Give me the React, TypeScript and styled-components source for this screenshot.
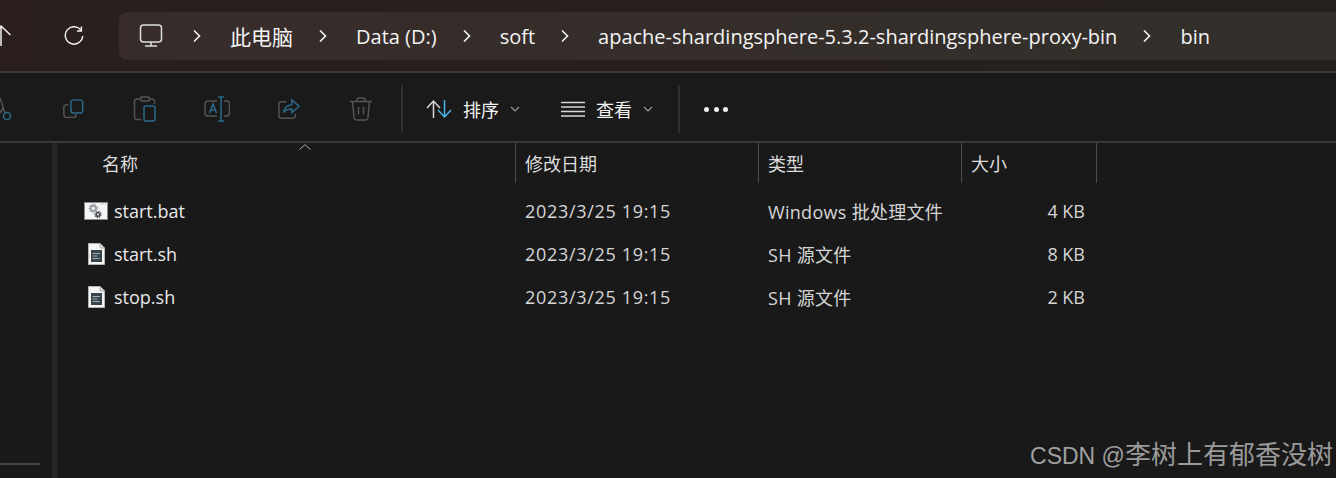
import React from 'react';
import styled, { createGlobalStyle } from 'styled-components';

const UI_FONT = `"Open Sans", "Noto Sans CJK SC", sans-serif`;

const GlobalStyle = createGlobalStyle`
  html, body {
    margin: 0;
    padding: 0;
    background: #191919;
  }
  body {
    font-family: ${UI_FONT};
    overflow: hidden;
  }
`;

const crumbs = [
  { label: '此电脑', cjk: true },
  { label: 'Data (D:)', cjk: false },
  { label: 'soft', cjk: false },
  { label: 'apache-shardingsphere-5.3.2-shardingsphere-proxy-bin', cjk: false },
  { label: 'bin', cjk: false },
];

const files = [
  { name: 'start.bat', date: '2023/3/25 19:15', type: 'Windows 批处理文件', size: '4 KB', kind: 'bat' },
  { name: 'start.sh', date: '2023/3/25 19:15', type: 'SH 源文件', size: '8 KB', kind: 'doc' },
  { name: 'stop.sh', date: '2023/3/25 19:15', type: 'SH 源文件', size: '2 KB', kind: 'doc' },
];

const Chevron = () => (
  <svg width="8" height="14" viewBox="0 0 8 14" fill="none" stroke="#f4f4f4" strokeWidth="1.6">
    <path d="M1 1.500 6.500 7 1 12.500" />
  </svg>
);

const SmallCaret = () => (
  <svg width="10" height="6" viewBox="0 0 10 6" fill="none" stroke="#9a9a9a" strokeWidth="1.2">
    <path d="M1 1 5 5 9 1" />
  </svg>
);

const BatIcon = () => (
  <svg width="24" height="18" viewBox="0 0 24 18">
    <rect x="0.500" y="0.500" width="23" height="17" fill="#f4f4f4" stroke="#8a8a8a" />
    <path d="M17 2h1M19 2h1M21 2h1" stroke="#a8a8a8" />
    <circle cx="9.300" cy="6.300" r="2.600" fill="none" stroke="#9aa0a6" strokeWidth="2" />
    <circle cx="9.300" cy="6.300" r="4" fill="none" stroke="#9aa0a6" strokeWidth="1.400" strokeDasharray="1.500 1.300" />
    <circle cx="14" cy="12.500" r="1.800" fill="none" stroke="#4a4e54" strokeWidth="1.600" />
    <circle cx="14" cy="12.500" r="3.100" fill="none" stroke="#4a4e54" strokeWidth="1.200" strokeDasharray="1.300 1.100" />
  </svg>
);

const DocIcon = () => (
  <svg width="17" height="22" viewBox="0 0 17 22">
    <path d="M0.500 0.500H12L16.500 5V21.500H0.500Z" fill="#f5f5f5" stroke="#b5b5b5" />
    <path d="M12 0.500V5H16.500" fill="#d8d8d8" stroke="#b5b5b5" />
    <rect x="3" y="7" width="11" height="12" fill="#38454d" />
    <path d="M4.500 10.500H12M4.500 13H9.500M4.500 15.500H11.500" stroke="#a5adb2" strokeWidth="1" />
  </svg>
);

const App: React.FC = () => (
  <Page>
    <GlobalStyle />
    <NavBar>
      <NavIcon>
        <svg width="22" height="24" viewBox="0 0 22 24" fill="none" stroke="#f0f0f0" strokeWidth="1.500">
          <path d="M1.500 11 11 2l9.500 9M11 2v20" />
        </svg>
      </NavIcon>
      <NavIcon>
        <svg width="20" height="20" viewBox="0 0 20 20" fill="none" stroke="#f0f0f0" strokeWidth="1.500">
          <path d="M17 4.200A8.700 8.700 0 1 0 18.700 10" />
          <path d="M17.400 0.600V5H13" />
        </svg>
      </NavIcon>
      <AddressBar>
        <svg width="24" height="24" viewBox="0 0 24 24" fill="none" stroke="#dedede" strokeWidth="1.500">
          <rect x="1.500" y="1" width="21" height="17" rx="3" />
          <path d="M12 18v3.500M6 22h12" />
        </svg>
        <Crumbs>
          {crumbs.map((c) => (
            <React.Fragment key={c.label}>
              <Chevron />
              <Crumb $cjk={c.cjk}>{c.label}</Crumb>
            </React.Fragment>
          ))}
        </Crumbs>
      </AddressBar>
    </NavBar>

    <Toolbar>
      <ToolGroup>
        <ToolIcon>
          <svg width="24" height="26" viewBox="0 0 24 26" fill="none" stroke="#555" strokeWidth="1.500">
            <path d="M11 2 16 17M11 17 14 12" />
            <circle cx="18" cy="20" r="3.600" stroke="#2a6a8a" />
          </svg>
        </ToolIcon>
        <ToolIcon>
          <svg width="21" height="21" viewBox="0 0 24 24" fill="none" strokeWidth="1.700">
            <path d="M6 6.500H4a3 3 0 0 0-3 3V18a3 3 0 0 0 3 3h8a3 3 0 0 0 3-3v-1" stroke="#555" />
            <rect x="9" y="1" width="13.500" height="15" rx="3" stroke="#2a6a8a" />
          </svg>
        </ToolIcon>
        <ToolIcon>
          <svg width="24" height="26" viewBox="0 0 24 26" fill="none" strokeWidth="1.500">
            <path d="M7 3H4a2.500 2.500 0 0 0-2.500 2.500V21A2.500 2.500 0 0 0 4 23.500h4M17 3h2a2.500 2.500 0 0 1 2.500 2.500V8" stroke="#555" />
            <rect x="7.500" y="1" width="9" height="4" rx="1.500" stroke="#555" />
            <rect x="11" y="10" width="11" height="15" rx="2" stroke="#2a6a8a" />
          </svg>
        </ToolIcon>
        <ToolIcon>
          <svg width="26" height="26" viewBox="0 0 26 26" fill="none" strokeWidth="1.500">
            <path d="M13 5H4a3 3 0 0 0-3 3v9a3 3 0 0 0 3 3h9M20 5h2.500a3 3 0 0 1 3 3v9a3 3 0 0 1-3 3H20" stroke="#555" />
            <path d="M14 1h6M17 1v24M14 25h6" stroke="#2a6a8a" />
            <path d="M5.500 17 9 8l3.500 9M6.800 14h4.400" stroke="#2a6a8a" />
          </svg>
        </ToolIcon>
        <ToolIcon>
          <svg width="22" height="22" viewBox="0 0 24 24" fill="none" strokeWidth="1.600">
            <path d="M9 4H4a3 3 0 0 0-3 3v12a3 3 0 0 0 3 3h12a3 3 0 0 0 3-3v-2" stroke="#555" />
            <path d="M15 2l8 7-8 7v-4c-4 0-7 1-9 4 .5-5 4-8 9-9Z" stroke="#2a6a8a" />
          </svg>
        </ToolIcon>
        <ToolIcon>
          <svg width="22" height="24" viewBox="0 0 22 24" fill="none" stroke="#555" strokeWidth="1.500">
            <path d="M0 4.500h22M7 4.500V3a2 2 0 0 1 2-2h4a2 2 0 0 1 2 2v1.500M2.500 4.500 4 20.500a3 3 0 0 0 3 2.500h8a3 3 0 0 0 3-2.500l1.500-16M8.500 10v7.500M13.500 10v7.500" />
          </svg>
        </ToolIcon>
      </ToolGroup>
      <ToolDivider />
      <MenuButton $width={135}>
        <svg width="26" height="20" viewBox="0 0 26 20" fill="none" strokeWidth="1.500">
          <path d="M1 9 7.500 2 14 9M7.500 2v17" stroke="#d8d8d8" />
          <path d="M12 11l6.500 7 6.500-7M18.500 1v17" stroke="#4cb4ea" />
        </svg>
        <MenuLabel>排序</MenuLabel>
        <SmallCaret />
      </MenuButton>
      <MenuButton $width={140}>
        <svg width="24" height="16" viewBox="0 0 24 16" stroke="#d8d8d8" strokeWidth="1.500">
          <path d="M0 1.500h24M0 6h24M0 10.500h24M0 15h24" />
        </svg>
        <MenuLabel>查看</MenuLabel>
        <SmallCaret />
      </MenuButton>
      <ToolDivider />
      <MoreDots>
        <Dot />
        <Dot />
        <Dot />
      </MoreDots>
    </Toolbar>

    <Body>
      <Sidebar>
        <SidebarRule />
      </Sidebar>
      <Pane>
        <HeaderRow>
          <HeaderCell $width={459} $indent={45}>
            名称
            <SortCaret width="12" height="6" viewBox="0 0 12 6" fill="none" stroke="#a8a8a8">
              <path d="M0.500 5.500 6 0.700 11.500 5.500" />
            </SortCaret>
          </HeaderCell>
          <HeaderCell $width={243} $indent={9}>修改日期</HeaderCell>
          <HeaderCell $width={203} $indent={9}>类型</HeaderCell>
          <HeaderCell $width={135} $indent={9}>大小</HeaderCell>
        </HeaderRow>
        <FileList>
          {files.map((f) => (
            <FileRow key={f.name}>
              <NameCell>
                <FileIconBox>{f.kind === 'bat' ? <BatIcon /> : <DocIcon />}</FileIconBox>
                {f.name}
              </NameCell>
              <DateCell>{f.date}</DateCell>
              <TypeCell>{f.type}</TypeCell>
              <SizeCell>{f.size}</SizeCell>
            </FileRow>
          ))}
        </FileList>
      </Pane>
    </Body>
    <Watermark>
      CSDN @<WatermarkName>李树上有郁香没树</WatermarkName>
    </Watermark>
  </Page>
);

const Page = styled.div`
  position: relative;
  width: 1336px;
  height: 478px;
  overflow: hidden;
  display: flex;
  flex-direction: column;
  background: #191919;
`;

const NavBar = styled.div`
  height: 73px;
  box-sizing: border-box;
  display: flex;
  align-items: center;
  padding: 1px 0 0 0;
  margin-left: -10px;
  background: linear-gradient(90deg, #2a1e1e 0%, #291f1e 45%, #26211d 100%);
  border-bottom: 2px solid #3a3a3a;
`;

const NavIcon = styled.div`
  width: 22px;
  display: flex;
  align-items: center;
  justify-content: center;
  margin-right: 51px;
  &:nth-child(2) {
    margin-right: 34px;
  }
`;

const AddressBar = styled.div`
  flex: 1;
  height: 48px;
  margin-right: -20px;
  padding-left: 20px;
  display: flex;
  align-items: center;
  border-radius: 8px;
  background: linear-gradient(90deg, #372c2b 0%, #352e2b 50%, #32302b 100%);
`;

const Crumbs = styled.div`
  display: flex;
  align-items: center;
  margin-left: 30px;
`;

const Crumb = styled.span<{ $cjk: boolean }>`
  margin: 0 26px 0 29px;
  font-size: ${(props) => (props.$cjk ? 21 : 20)}px;
  color: #f4f4f4;
  white-space: nowrap;
`;

const Toolbar = styled.div`
  height: 70px;
  box-sizing: border-box;
  padding-top: 4px;
  display: flex;
  align-items: center;
  border-bottom: 2px solid #3a3a3a;
  background: #1a1a1a;
`;

const ToolGroup = styled.div`
  display: flex;
  align-items: center;
  margin-left: -35px;
  padding-right: 4px;
`;

const ToolIcon = styled.div`
  width: 72px;
  display: flex;
  align-items: center;
  justify-content: center;
`;

const ToolDivider = styled.div`
  width: 2px;
  height: 48px;
  background: #303030;
`;

const MenuButton = styled.div<{ $width: number }>`
  width: ${(props) => props.$width}px;
  box-sizing: border-box;
  padding-left: 23px;
  display: flex;
  align-items: center;
  gap: 11px;
`;

const MenuLabel = styled.span`
  font-size: 18px;
  color: #f2f2f2;
`;

const MoreDots = styled.div`
  margin-left: 24px;
  display: flex;
  gap: 4.500px;
`;

const Dot = styled.span`
  width: 5px;
  height: 5px;
  border-radius: 50%;
  background: #f0f0f0;
`;

const Body = styled.div`
  flex: 1;
  display: flex;
  background: #191919;
`;

const Sidebar = styled.div`
  width: 52px;
  flex-shrink: 0;
  border-right: 5px solid #262626;
  display: flex;
  align-items: flex-end;
  padding-bottom: 13px;
  box-sizing: content-box;
`;

const SidebarRule = styled.div`
  width: 40px;
  height: 2px;
  background: #444;
`;

const Pane = styled.div`
  flex: 1;
  display: flex;
  flex-direction: column;
`;

const HeaderRow = styled.div`
  display: flex;
  height: 40px;
`;

const HeaderCell = styled.div<{ $width: number; $indent: number }>`
  position: relative;
  width: ${(props) => props.$width}px;
  box-sizing: border-box;
  padding-left: ${(props) => props.$indent}px;
  display: flex;
  align-items: center;
  font-size: 18px;
  color: #dcdcdc;
  border-right: 1px solid #4a4a4a;
`;

const SortCaret = styled.svg`
  position: absolute;
  top: 1px;
  left: 242px;
`;

const FileList = styled.div`
  padding-top: 6px;
  display: flex;
  flex-direction: column;
`;

const FileRow = styled.div`
  display: flex;
  align-items: center;
  height: 43px;
  font-size: 18px;
  color: #e8e8e8;
  white-space: nowrap;
`;

const NameCell = styled.div`
  width: 458px;
  padding-left: 27px;
  box-sizing: border-box;
  display: flex;
  align-items: center;
`;

const FileIconBox = styled.span`
  width: 24px;
  margin-right: 6px;
  display: flex;
  justify-content: center;
`;

const DateCell = styled.div`
  width: 243px;
  padding-left: 10px;
  box-sizing: border-box;
  color: #d6d6d6;
  letter-spacing: 0.68px;
`;

const TypeCell = styled.div`
  width: 203px;
  padding-left: 10px;
  box-sizing: border-box;
  color: #d6d6d6;
  letter-spacing: 0.3px;
`;

const SizeCell = styled.div`
  width: 124px;
  text-align: right;
  color: #d6d6d6;
`;

const Watermark = styled.div`
  position: absolute;
  right: 3px;
  top: 436px;
  font-family: "Liberation Sans", "Noto Sans CJK SC", sans-serif;
  font-size: 23px;
  line-height: 38px;
  color: #a0a0a0;
  white-space: nowrap;
`;

const WatermarkName = styled.span`
  font-size: 26px;
  color: #9a9a9a;
`;

export default App;
